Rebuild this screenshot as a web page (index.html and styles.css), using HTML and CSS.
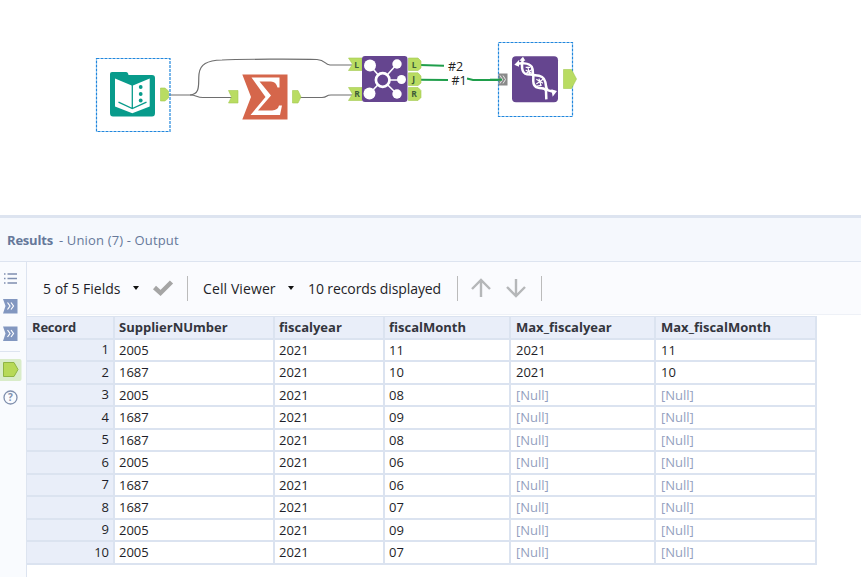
FILE: index.html
```html
<!DOCTYPE html>
<html lang="en">
<head>
  <meta charset="UTF-8">
  <meta name="viewport" content="width=device-width, initial-scale=1.0">
  <title>Workflow</title>
  <link rel="stylesheet" href="styles.css">
</head>
<body>
  <div class="canvas">
    <svg width="861" height="215" viewBox="0 0 861 215">
      <!-- wires -->
      <g class="wire">
        <path d="M169 95H190C201 94 198 84 199 74C200 64 207 60.500 222 60C240 59 300 59 317 59.500C326 60 324 64.500 330 65H352"/>
        <path d="M190 95C197 95 196 97.500 203 97.500H232"/>
        <path d="M300 97.500H322C328 97.500 325 95 331 95H353"/>
      </g>
      <g class="wire-green">
        <path d="M420 65L444 65.700"/>
        <path d="M420 79.700L448 80"/>
        <path d="M467 78.500L473 80H503"/>
      </g>

      <!-- input data -->
      <rect class="selection" x="96.500" y="58.500" width="73.500" height="73"/>
      <path fill="#089b8b" d="M112 72H126Q128 72 128.500 75H152Q155 75 155 78V113Q155 116.500 152 116.500H113Q110 116.500 110 113V74Q110 72 112 72Z"/>
      <path fill="#fff" d="M115 78.500L132.300 85.700L149.700 78.500V106.500L132.300 113.200L115 106.500Z"/>
      <path fill="none" stroke="#089b8b" stroke-width="1.300" d="M132.300 85V108.300M118.500 102.200L132.300 108.600L146.500 102.200"/>
      <g fill="#089b8b">
        <circle cx="140.700" cy="87" r="1.900"/>
        <circle cx="140.700" cy="94" r="1.900"/>
        <circle cx="140.700" cy="100.500" r="1.900"/>
      </g>
      <path class="anchor" d="M160.500 88H165L168.500 91V98L165 101H160.500Z"/>

      <!-- summarize -->
      <path class="anchor" d="M228.500 90.500H238V103H228.500L231.500 97Z"/>
      <path fill="#d5664b" d="M242.300 74.500H287.500V119.500H242.300L251 97Z"/>
      <path fill="#fff" d="M251.500 77.500H279.500V87.500H277.500Q276 81.500 271 81.500H259.500L271 95.500L258 110.500H272Q278 110 279 105.500H282L280 115H250.500L265.500 97Z"/>
      <path class="anchor" d="M292.500 90.500H298L301 97L298 103H292.500Z"/>

      <!-- join -->
      <path class="anchor" d="M348.500 58H362V70.500H348.500L352.500 64.300Z"/>
      <path class="anchor" d="M348.500 87.500H362V100.500H348.500L352.500 94Z"/>
      <rect x="362" y="56" width="45.500" height="46" rx="3" fill="#65458f"/>
      <path stroke="#fff" stroke-width="1.600" d="M382.700 80L370 65.500M382.700 80L397 64M382.700 80H401M382.700 80L397 94M382.700 80L369.500 93.500"/>
      <circle cx="382.700" cy="80" r="6.800" fill="#65458f" stroke="#fff" stroke-width="2.700"/>
      <g fill="#fff">
        <circle cx="370" cy="65.500" r="6"/>
        <circle cx="397" cy="64" r="4.700"/>
        <circle cx="401.500" cy="79.500" r="4.500"/>
        <circle cx="397" cy="94" r="4.700"/>
        <circle cx="369.500" cy="93.500" r="6"/>
      </g>
      <path class="anchor" d="M408.500 58H418L421 61V68L418 70.500H408.500Z"/>
      <path class="anchor" d="M408.500 72.800H418L421 76V83L418 85.500H408.500Z"/>
      <path class="anchor" d="M408.500 87.500H418L421 90.500V97.500L418 100.500H408.500Z"/>
      <g class="port">
        <text x="354.300" y="67.500">L</text>
        <text x="354.300" y="96.500">R</text>
        <text x="411.800" y="67.500">L</text>
        <text x="412.300" y="81.500">J</text>
        <text x="411.300" y="96.500">R</text>
      </g>
      <text class="wire-label" x="448" y="71">#2</text>
      <text class="wire-label" x="451.500" y="85">#1</text>

      <!-- union -->
      <rect class="selection" x="498.500" y="42.500" width="74" height="74"/>
      <rect x="498.500" y="73.500" width="9" height="12" fill="#8a8a8a"/>
      <path fill="none" stroke="#e8e8e8" stroke-width="1" d="M500 75.500L502.500 79.500L500 83.500M503 75.500L505.500 79.500L503 83.500"/>
      <path class="wire-green" d="M490 79.700H502"/>
      <rect x="512" y="56.300" width="46" height="46" rx="4" fill="#65458f"/>
      <g transform="translate(505 50) scale(.3333)">
        <g fill="none" stroke="#fff" stroke-width="7.500">
          <path d="M54 26C49 44 48 70 66 73C78 74 82 72 90 76C112 76 118 84 121 96C124 110 122 118 130 121L148 126"/>
          <path d="M34 43C46 38 72 38 80 50C86 60 82 72 85 80C84 96 84 108 98 113C110 117 120 112 123 122L124 148"/>
          <path stroke-width="3.500" d="M62 60L80 70M64 70L82 58M62 52L76 52M68 50L74 72M94 88L114 100M94 102L114 88M96 108L110 106M102 86L108 108"/>
        </g>
        <path fill="#fff" d="M43 32L54 20L61 32ZM28 44L42 30V50ZM139 118L156 123L143 140Z"/>
      </g>
      <path class="anchor" d="M563.500 69.500H571.500L576.500 79L571.500 88.500H563.500Z"/>
    </svg>
  </div>

  <div class="results">
    <div class="results-title"><b>Results</b><span>- Union (7) - Output</span></div>
    <div class="results-body">
      <div class="sidebar">
        <svg width="26" height="150" viewBox="0 0 26 150">
          <path stroke="#7f8fb0" stroke-width="1.300" d="M4 12H5.500M7.500 12H17M4 16.500H5.500M7.500 16.500H17M4 21H5.500M7.500 21H17"/>
          <g id="messages">
            <path fill="#8297c0" d="M3 37H17.500V51.500H3L5.500 44Z"/>
            <path fill="none" stroke="#fff" stroke-width="1.200" d="M7.500 40.500L10 44L7.500 47.500M11 40.500L13.500 44L11 47.500"/>
          </g>
          <use href="#messages" y="27.500"/>
          <path stroke="#dde4f0" d="M0 89.500H20"/>
          <rect x="-2" y="97" width="23.500" height="22" rx="2" fill="#d9ecc9"/>
          <path fill="#b7d957" stroke="#8fb544" d="M3.500 100.500H14L18 107.500L14 114.500H3.500Z"/>
          <circle cx="10.500" cy="135.500" r="6.500" fill="none" stroke="#8090ae" stroke-width="1.300"/>
          <text class="help" x="10.500" y="139.300">?</text>
        </svg>
      </div>
      <div class="main">
        <div class="toolbar">
          <span class="fields">5 of 5 Fields</span>
          <i class="caret"></i>
          <svg class="check" width="22" height="18" viewBox="0 0 22 18"><path fill="none" stroke="#a5a5a5" stroke-width="4.500" d="M2.500 8.500L8.500 14L19.500 3"/></svg>
          <i class="divider"></i>
          <span class="viewer">Cell Viewer</span>
          <i class="caret"></i>
          <span class="count">10 records displayed</span>
          <i class="divider"></i>
          <svg class="arrow" width="20" height="20" viewBox="0 0 20 20"><path d="M10 19V2M1 11L10 2L19 11"/></svg>
          <svg class="arrow" width="20" height="20" viewBox="0 0 20 20"><path d="M10 1V18M1 9L10 18L19 9"/></svg>
          <i class="divider"></i>
        </div>
        <table class="grid">
          <colgroup><col class="c1"><col class="c2"><col class="c3"><col class="c4"><col class="c5"><col class="c6"></colgroup>
          <thead>
            <tr><th>Record</th><th>SupplierNUmber</th><th>fiscalyear</th><th>fiscalMonth</th><th>Max_fiscalyear</th><th>Max_fiscalMonth</th></tr>
          </thead>
          <tbody>
            <tr><td>1</td><td>2005</td><td>2021</td><td>11</td><td>2021</td><td>11</td></tr>
            <tr><td>2</td><td>1687</td><td>2021</td><td>10</td><td>2021</td><td>10</td></tr>
            <tr><td>3</td><td>2005</td><td>2021</td><td>08</td><td class="null">[Null]</td><td class="null">[Null]</td></tr>
            <tr><td>4</td><td>1687</td><td>2021</td><td>09</td><td class="null">[Null]</td><td class="null">[Null]</td></tr>
            <tr><td>5</td><td>1687</td><td>2021</td><td>08</td><td class="null">[Null]</td><td class="null">[Null]</td></tr>
            <tr><td>6</td><td>2005</td><td>2021</td><td>06</td><td class="null">[Null]</td><td class="null">[Null]</td></tr>
            <tr><td>7</td><td>1687</td><td>2021</td><td>06</td><td class="null">[Null]</td><td class="null">[Null]</td></tr>
            <tr><td>8</td><td>1687</td><td>2021</td><td>07</td><td class="null">[Null]</td><td class="null">[Null]</td></tr>
            <tr><td>9</td><td>2005</td><td>2021</td><td>09</td><td class="null">[Null]</td><td class="null">[Null]</td></tr>
            <tr><td>10</td><td>2005</td><td>2021</td><td>07</td><td class="null">[Null]</td><td class="null">[Null]</td></tr>
          </tbody>
        </table>
      </div>
    </div>
  </div>
</body>
</html>
```
FILE: styles.css
```css
* {
  box-sizing: border-box;
}
body {
  margin: 0;
  height: 577px;
  overflow: hidden;
  background: #fff;
  color: #1e1e28;
  font-family: "Open Sans", "Noto Sans", sans-serif;
  font-size: 14px;
}
svg {
  display: block;
  flex: none;
}
.canvas {
  height: 215px;
}
.wire {
  fill: none;
  stroke: #6e6e6e;
  stroke-width: 1.2;
}
.wire-green {
  fill: none;
  stroke: #1f9e4b;
  stroke-width: 2;
}
.selection {
  fill: none;
  stroke: #2187dd;
  stroke-width: 1.2;
  stroke-dasharray: 3 1;
}
.anchor {
  fill: #b9dc62;
  stroke: #a3c950;
  stroke-width: .6;
}
.port {
  font-size: 8.5px;
  font-weight: bold;
  fill: #3d5c38;
}
.wire-label {
  font-size: 12.5px;
  fill: #222;
}
.results {
  height: 362px;
  border-top: 3px solid #dde4f0;
  background: #f9fbfe;
}
.results-title {
  display: flex;
  align-items: center;
  gap: 6px;
  height: 44px;
  padding-left: 7px;
  background: #f5f8fd;
  border-bottom: 1px solid #dde4f0;
  color: #66789a;
  font-size: 13px;
}
.results-title b {
  width: 46px;
  letter-spacing: -.2px;
}
.results-title span {
  letter-spacing: .15px;
}
.results-body {
  display: flex;
  height: 315px;
}
.sidebar {
  width: 27px;
  border-right: 1px solid #dde4f0;
}
.help {
  font-size: 10px;
  font-weight: bold;
  fill: #8090ae;
  text-anchor: middle;
}
.main {
  flex: 1;
  background: #fff;
}
.toolbar {
  display: flex;
  align-items: center;
  height: 53px;
  padding-left: 16px;
  background: #fafbfe;
  border-bottom: 1px solid #eef1f7;
  white-space: nowrap;
}
.fields {
  width: 90px;
}
.viewer {
  width: 85px;
  letter-spacing: .1px;
}
.count {
  width: 149px;
  letter-spacing: -.1px;
}
.caret {
  border: 3.5px solid transparent;
  border-top: 4px solid #111;
  border-bottom: 0;
  margin-right: 13px;
}
.viewer + .caret {
  margin-right: 14px;
}
.check {
  margin-right: 13px;
}
.divider {
  width: 1px;
  height: 25px;
  margin-right: 15px;
  background: #bbb;
}
.count + .divider {
  margin-right: 13px;
}
.arrow {
  fill: none;
  stroke: #b5b7b9;
  stroke-width: 2.4;
  margin-right: 15px;
}
.grid {
  table-layout: fixed;
  width: 790px;
  margin-top: 1px;
  border-collapse: separate;
  border-spacing: 0;
  border-top: 1px solid #dbe3f0;
}
.c1 { width: 88px; }
.c2 { width: 160px; }
.c3 { width: 110px; }
.c4 { width: 126px; }
.c5 { width: 145px; }
.c6 { width: 161px; }
.grid th,
.grid td {
  height: 22.5px;
  padding: 0 0 0 4px;
  border-right: 2px solid #dbe3f0;
  border-bottom: 2px solid #dbe3f0;
  line-height: 18px;
  text-align: left;
  font-size: 13px;
}
.grid td {
  padding-top: 1px;
  line-height: 17px;
}
.grid th {
  background: #e9eef9;
  color: #33353d;
}
.grid th:first-child {
  padding-left: 5px;
  letter-spacing: -.2px;
}
.grid th:nth-child(n+5),
.grid td:nth-child(n+5) {
  padding-left: 5px;
}
.grid td:first-child {
  padding-top: 0;
  padding-right: 4px;
  background: #e9eef9;
  text-align: right;
}
.grid .null {
  color: #949fc0;
}
```
